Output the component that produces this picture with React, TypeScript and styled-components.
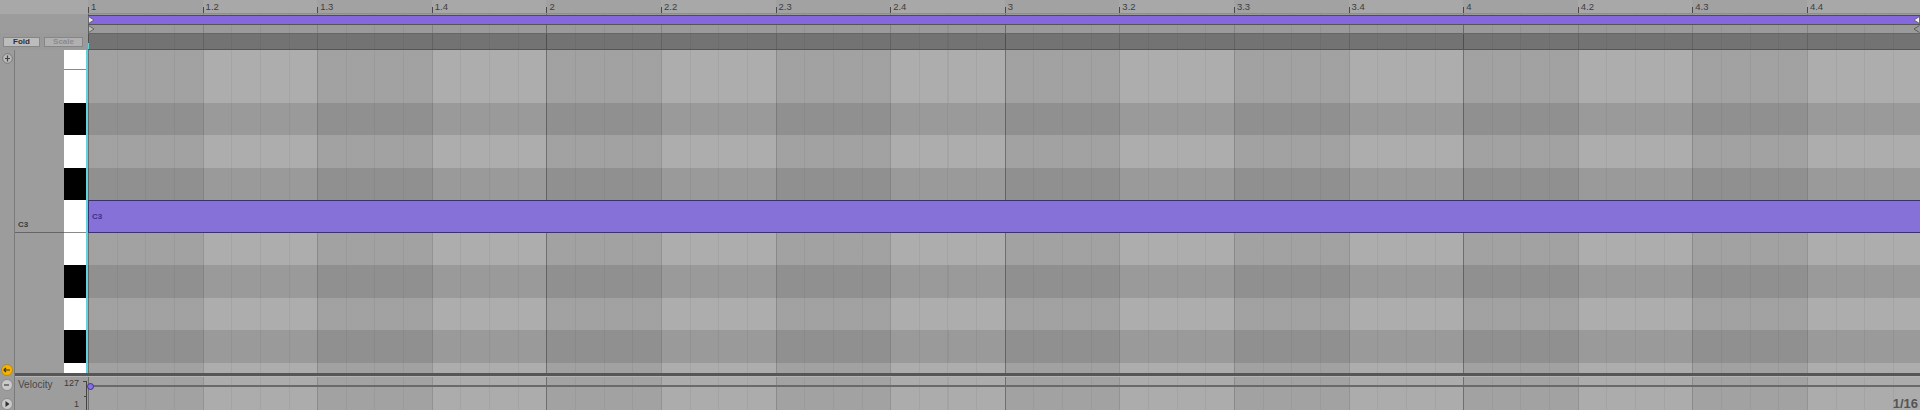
import React from 'react';
import styled, { createGlobalStyle } from 'styled-components';

// beat geometry of the piano roll (px at this zoom level)
const BEAT = 114.6;
const SIXTEENTH = BEAT / 4;
const BAR = BEAT * 4;

const columnLines = (shade: number) => `
	repeating-linear-gradient(90deg, rgba(0,0,0,0.2) 0 1px, transparent 1px ${BAR}px),
	repeating-linear-gradient(90deg, rgba(0,0,0,0.1) 0 1px, transparent 1px ${BEAT}px),
	repeating-linear-gradient(90deg, rgba(0,0,0,0.05) 0 1px, transparent 1px ${SIXTEENTH}px),
	repeating-linear-gradient(90deg, rgba(0,0,0,${shade}) 0 ${BEAT}px, transparent ${BEAT}px ${BEAT * 2}px)
`;

interface NoteRow {
	name: string,
	height: number,
	black: boolean
}

const rows: NoteRow[] = [
	{ name: 'F3', height: 20, black: false },
	{ name: 'E3', height: 32.5, black: false },
	{ name: 'D#3', height: 32.5, black: true },
	{ name: 'D3', height: 32.5, black: false },
	{ name: 'C#3', height: 32.5, black: true },
	{ name: 'C3', height: 32.5, black: false },
	{ name: 'B2', height: 32.5, black: false },
	{ name: 'A#2', height: 32.5, black: true },
	{ name: 'A2', height: 32.5, black: false },
	{ name: 'G#2', height: 32.5, black: true },
	{ name: 'G2', height: 10.5, black: false }
];

const beats: string[] = [];
for (let bar = 1; bar <= 4; bar++) {
	beats.push(String(bar), `${bar}.2`, `${bar}.3`, `${bar}.4`);
}

const GlobalStyle = createGlobalStyle`
	html, body {
		margin: 0;
		padding: 0;
		background: #9b9b9b;
		overflow: hidden;
	}
	* { box-sizing: border-box; }
	body {
		font-family: "Liberation Sans", Arial, sans-serif;
	}
`;

const Editor = styled.div`
	width: 1920px;
	height: 410px;
	display: flex;
	flex-direction: column;
	position: relative;
	overflow: hidden;
	background: #9b9b9b;
`;

const Header = styled.div`
	display: grid;
	grid-template-columns: 88px 1fr;
	grid-template-rows: 14px 19px 17px;
	flex: 0 0 50px;
`;

const HeaderLeft = styled.div<{ $tone: string }>`
	background: ${({ $tone }) => $tone};
	display: flex;
	align-items: center;
	gap: 4px;
	padding-left: 3px;
`;

const Ruler = styled.div`
	display: flex;
	background: #a8a8a8;
	border-bottom: 1px solid #8e8e8e;
	overflow: hidden;
`;

const RulerCell = styled.div<{ $odd: boolean }>`
	flex: 0 0 ${BEAT}px;
	position: relative;
	background: ${({ $odd }) => ($odd ? 'rgba(0,0,0,0.035)' : 'transparent')};
	font-size: 9.5px;
	color: #3e3e3e;
	padding: 2px 0 0 3px;
	line-height: 10px;
	&::before {
		content: '';
		position: absolute;
		left: 0;
		bottom: 0;
		width: 1px;
		height: 6px;
		background: #4a4a4a;
	}
`;

const LoopRow = styled.div`
	position: relative;
	background: #9a9a9a;
	background-image: ${columnLines(0)};
	display: flex;
	flex-direction: column;
`;

const LoopBar = styled.div`
	margin-top: 1px;
	height: 10px;
	background: #8468dc;
	border-top: 1px solid #4e4e4e;
	border-bottom: 1px solid #555;
`;

const Marker = styled.svg<{ $top: number }>`
	position: absolute;
	left: 0;
	top: ${({ $top }) => $top}px;
`;

const EndMarker = styled.svg<{ $top: number }>`
	position: absolute;
	right: 0;
	top: ${({ $top }) => $top}px;
`;

const FoldStrip = styled.div`
	background-color: #737373;
	background-image: ${columnLines(0)};
	border-top: 1px solid #666;
	border-bottom: 1px solid #555;
	position: relative;
	&::before {
		content: '';
		position: absolute;
		left: 0;
		bottom: 0;
		width: 1px;
		height: 6px;
		background: #5fd3df;
	}
`;

const ToggleButton = styled.div<{ $disabled?: boolean }>`
	height: 10px;
	width: ${({ $disabled }) => ($disabled ? 39 : 37)}px;
	background: ${({ $disabled }) => ($disabled ? '#b0b0b0' : '#bcbcbc')};
	border: 1px solid #868686;
	font-size: 8px;
	line-height: 8px;
	font-weight: bold;
	text-align: center;
	color: ${({ $disabled }) => ($disabled ? '#8a8a8a' : '#2f2f2f')};
`;

const Body = styled.div`
	flex: 1;
	display: flex;
	min-height: 0;
`;

const SideStrip = styled.div`
	flex: 0 0 15px;
	background: #9c9c9c;
	border-right: 1px solid #7a7a7a;
	display: flex;
	flex-direction: column;
	align-items: center;
	padding-top: 3px;
`;

const SideIcon = styled.svg<{ $gap?: number }>`
	margin-top: ${({ $gap }) => $gap || 0}px;
	flex: 0 0 auto;
`;

const Spacer = styled.div`
	flex: 1;
`;

const Lanes = styled.div`
	flex: 1;
	display: flex;
	flex-direction: column;
	min-width: 0;
`;

const NoteArea = styled.div`
	flex: 0 0 323px;
	display: flex;
	overflow: hidden;
`;

const Column = styled.div<{ $width?: number }>`
	display: flex;
	flex-direction: column;
	${({ $width }) => ($width ? `flex: 0 0 ${$width}px;` : 'flex: 1; min-width: 0;')}
`;

const LabelCell = styled.div<{ $h: number, $edge: boolean }>`
	flex: 0 0 ${({ $h }) => $h}px;
	background: #9d9d9d;
	border-bottom: ${({ $edge }) => ($edge ? '1px solid #666' : 'none')};
	display: flex;
	align-items: flex-end;
	padding: 0 0 3px 3px;
	font-size: 8px;
	font-weight: bold;
	color: #3a3a3a;
`;

const PianoKeys = styled(Column)`
	border-right: 2px solid #62d2de;
`;

const Key = styled.div<{ $h: number, $black: boolean, $split: boolean }>`
	flex: 0 0 ${({ $h }) => $h}px;
	background: ${({ $black }) => ($black ? '#000' : '#fff')};
	border-bottom: ${({ $split }) => ($split ? '1px solid #8a8a8a' : 'none')};
`;

const GridRow = styled.div<{ $h: number, $black: boolean }>`
	flex: 0 0 ${({ $h }) => $h}px;
	display: flex;
	background-color: ${({ $black }) => ($black ? '#9a9a9a' : '#adadad')};
	background-image: ${columnLines(0.065)};
`;

const Note = styled.div`
	flex: 1;
	background: #8671d8;
	border: 1px solid #3a3170;
	border-right: none;
	display: flex;
	align-items: center;
	padding-left: 3px;
	font-size: 8px;
	font-weight: bold;
	color: #3b3088;
`;

const Divider = styled.div`
	flex: 0 0 4px;
	background: #565656;
	border-bottom: 1px solid #b4b4b4;
`;

const VelocityLane = styled.div`
	flex: 1;
	display: flex;
	min-height: 0;
`;

const VelocityLabels = styled.div`
	flex: 0 0 73px;
	background: #9d9d9d;
	position: relative;
	font-size: 9px;
	color: #505050;
`;

const VelocityTitle = styled.div`
	position: absolute;
	left: 3px;
	top: 2px;
	font-size: 10px;
	color: #484848;
`;

const ScaleLabel = styled.div<{ $top: number, $right: number }>`
	position: absolute;
	right: ${({ $right }) => $right}px;
	top: ${({ $top }) => $top}px;
	font-size: 9px;
	line-height: 9px;
	color: #3a3a3a;
`;

const Bracket = styled.div`
	position: absolute;
	right: 1px;
	top: 4px;
	bottom: -2px;
	width: 4px;
	border-top: 1px solid #444;
	border-right: 1px solid #444;
	&::after {
		content: '';
		position: absolute;
		right: 0;
		top: 14px;
		width: 2px;
		height: 1px;
		background: #444;
	}
`;

const VelocityGrid = styled.div`
	flex: 1;
	position: relative;
	background-color: #acacac;
	background-image: ${columnLines(0.06)};
`;

const VelocityLine = styled.div`
	position: absolute;
	left: 2px;
	right: 0;
	top: 8px;
	height: 2px;
	background: #6a6a6a;
`;

const VelocityDot = styled.div`
	position: absolute;
	left: -1px;
	top: 6px;
	width: 7px;
	height: 7px;
	border-radius: 50%;
	background: #8a6fe2;
	border: 1px solid #3e3585;
`;

const GridLabel = styled.div`
	position: absolute;
	right: 2px;
	bottom: 0;
	font-size: 13px;
	line-height: 13px;
	font-weight: bold;
	color: #555;
`;

const App = () => {
	return (
		<>
			<GlobalStyle />
			<Editor>
				<Header>
					<HeaderLeft $tone="#a8a8a8" />
					<Ruler>
						{beats.map((label, i) => (
							<RulerCell key={label} $odd={i % 2 === 0}>{label}</RulerCell>
						))}
					</Ruler>
					<HeaderLeft $tone="#9c9c9c" />
					<LoopRow>
						<LoopBar />
						<Marker $top={2} width="7" height="8" viewBox="0 0 7 8">
							<path d="M0.5 0.5 L6 4 L0.5 7.5 Z" fill="#e8e8e8" stroke="#555" strokeWidth="0.8" />
						</Marker>
						<Marker $top={11} width="7" height="8" viewBox="0 0 7 8">
							<path d="M0.5 0.5 L6 4 L0.5 7.5 Z" fill="#bdbdbd" stroke="#555" strokeWidth="0.8" />
						</Marker>
						<EndMarker $top={2} width="7" height="8" viewBox="0 0 7 8">
							<path d="M6.5 0.5 L1 4 L6.5 7.5 Z" fill="#f2f2f2" stroke="#555" strokeWidth="0.8" />
						</EndMarker>
						<EndMarker $top={11} width="7" height="8" viewBox="0 0 7 8">
							<path d="M6.5 0.5 L1 4 L6.5 7.5" fill="none" stroke="#555" strokeWidth="0.9" />
						</EndMarker>
					</LoopRow>
					<HeaderLeft $tone="#9a9a9a">
						<ToggleButton>Fold</ToggleButton>
						<ToggleButton $disabled>Scale</ToggleButton>
					</HeaderLeft>
					<FoldStrip />
				</Header>
				<Body>
					<SideStrip>
						<SideIcon width="11" height="11" viewBox="0 0 11 11">
							<circle cx="5.5" cy="5.5" r="4.8" fill="#b9b9b9" stroke="#6e6e6e" strokeWidth="0.8" />
							<path d="M5.5 2.5 V8.5 M3 5.5 H8" stroke="#444" strokeWidth="1.2" />
						</SideIcon>
						<Spacer />
						<SideIcon width="12" height="12" viewBox="0 0 12 12">
							<circle cx="6" cy="6" r="5.5" fill="#f3b300" stroke="#a77b00" strokeWidth="0.6" />
							<path d="M2.8 6 H9 M2.8 6 L5 4 M2.8 6 L5 8" stroke="#333" strokeWidth="1.1" fill="none" />
						</SideIcon>
						<SideIcon $gap={3} width="12" height="12" viewBox="0 0 12 12">
							<circle cx="6" cy="6" r="5.5" fill="#c9c9c9" stroke="#777" strokeWidth="0.6" />
							<path d="M3 6 H8" stroke="#555" strokeWidth="1.4" />
						</SideIcon>
						<SideIcon $gap={7} width="12" height="12" viewBox="0 0 12 12">
							<circle cx="6" cy="6" r="5.5" fill="#c9c9c9" stroke="#777" strokeWidth="0.6" />
							<path d="M4.5 3 L8.5 6 L4.5 9 Z" fill="#2f2f2f" />
						</SideIcon>
					</SideStrip>
					<Lanes>
						<NoteArea>
							<Column $width={49}>
								{rows.map((row) => (
									<LabelCell key={row.name} $h={row.height} $edge={row.name === 'C3'}>
										{row.name === 'C3' ? 'C3' : null}
									</LabelCell>
								))}
							</Column>
							<PianoKeys $width={24}>
								{rows.map((row, i) => (
									<Key
										key={row.name}
										$h={row.height}
										$black={row.black}
										$split={!row.black && !!rows[i + 1] && !rows[i + 1].black}
									/>
								))}
							</PianoKeys>
							<Column>
								{rows.map((row) => (
									<GridRow key={row.name} $h={row.height} $black={row.black}>
										{row.name === 'C3' ? <Note>C3</Note> : null}
									</GridRow>
								))}
							</Column>
						</NoteArea>
						<Divider />
						<VelocityLane>
							<VelocityLabels>
								<VelocityTitle>Velocity</VelocityTitle>
								<ScaleLabel $top={2} $right={9}>127</ScaleLabel>
								<ScaleLabel $top={23} $right={9}>1</ScaleLabel>
								<Bracket />
							</VelocityLabels>
							<VelocityGrid>
								<VelocityLine />
								<VelocityDot />
								<GridLabel>1/16</GridLabel>
							</VelocityGrid>
						</VelocityLane>
					</Lanes>
				</Body>
			</Editor>
		</>
	);
};

export default App;
